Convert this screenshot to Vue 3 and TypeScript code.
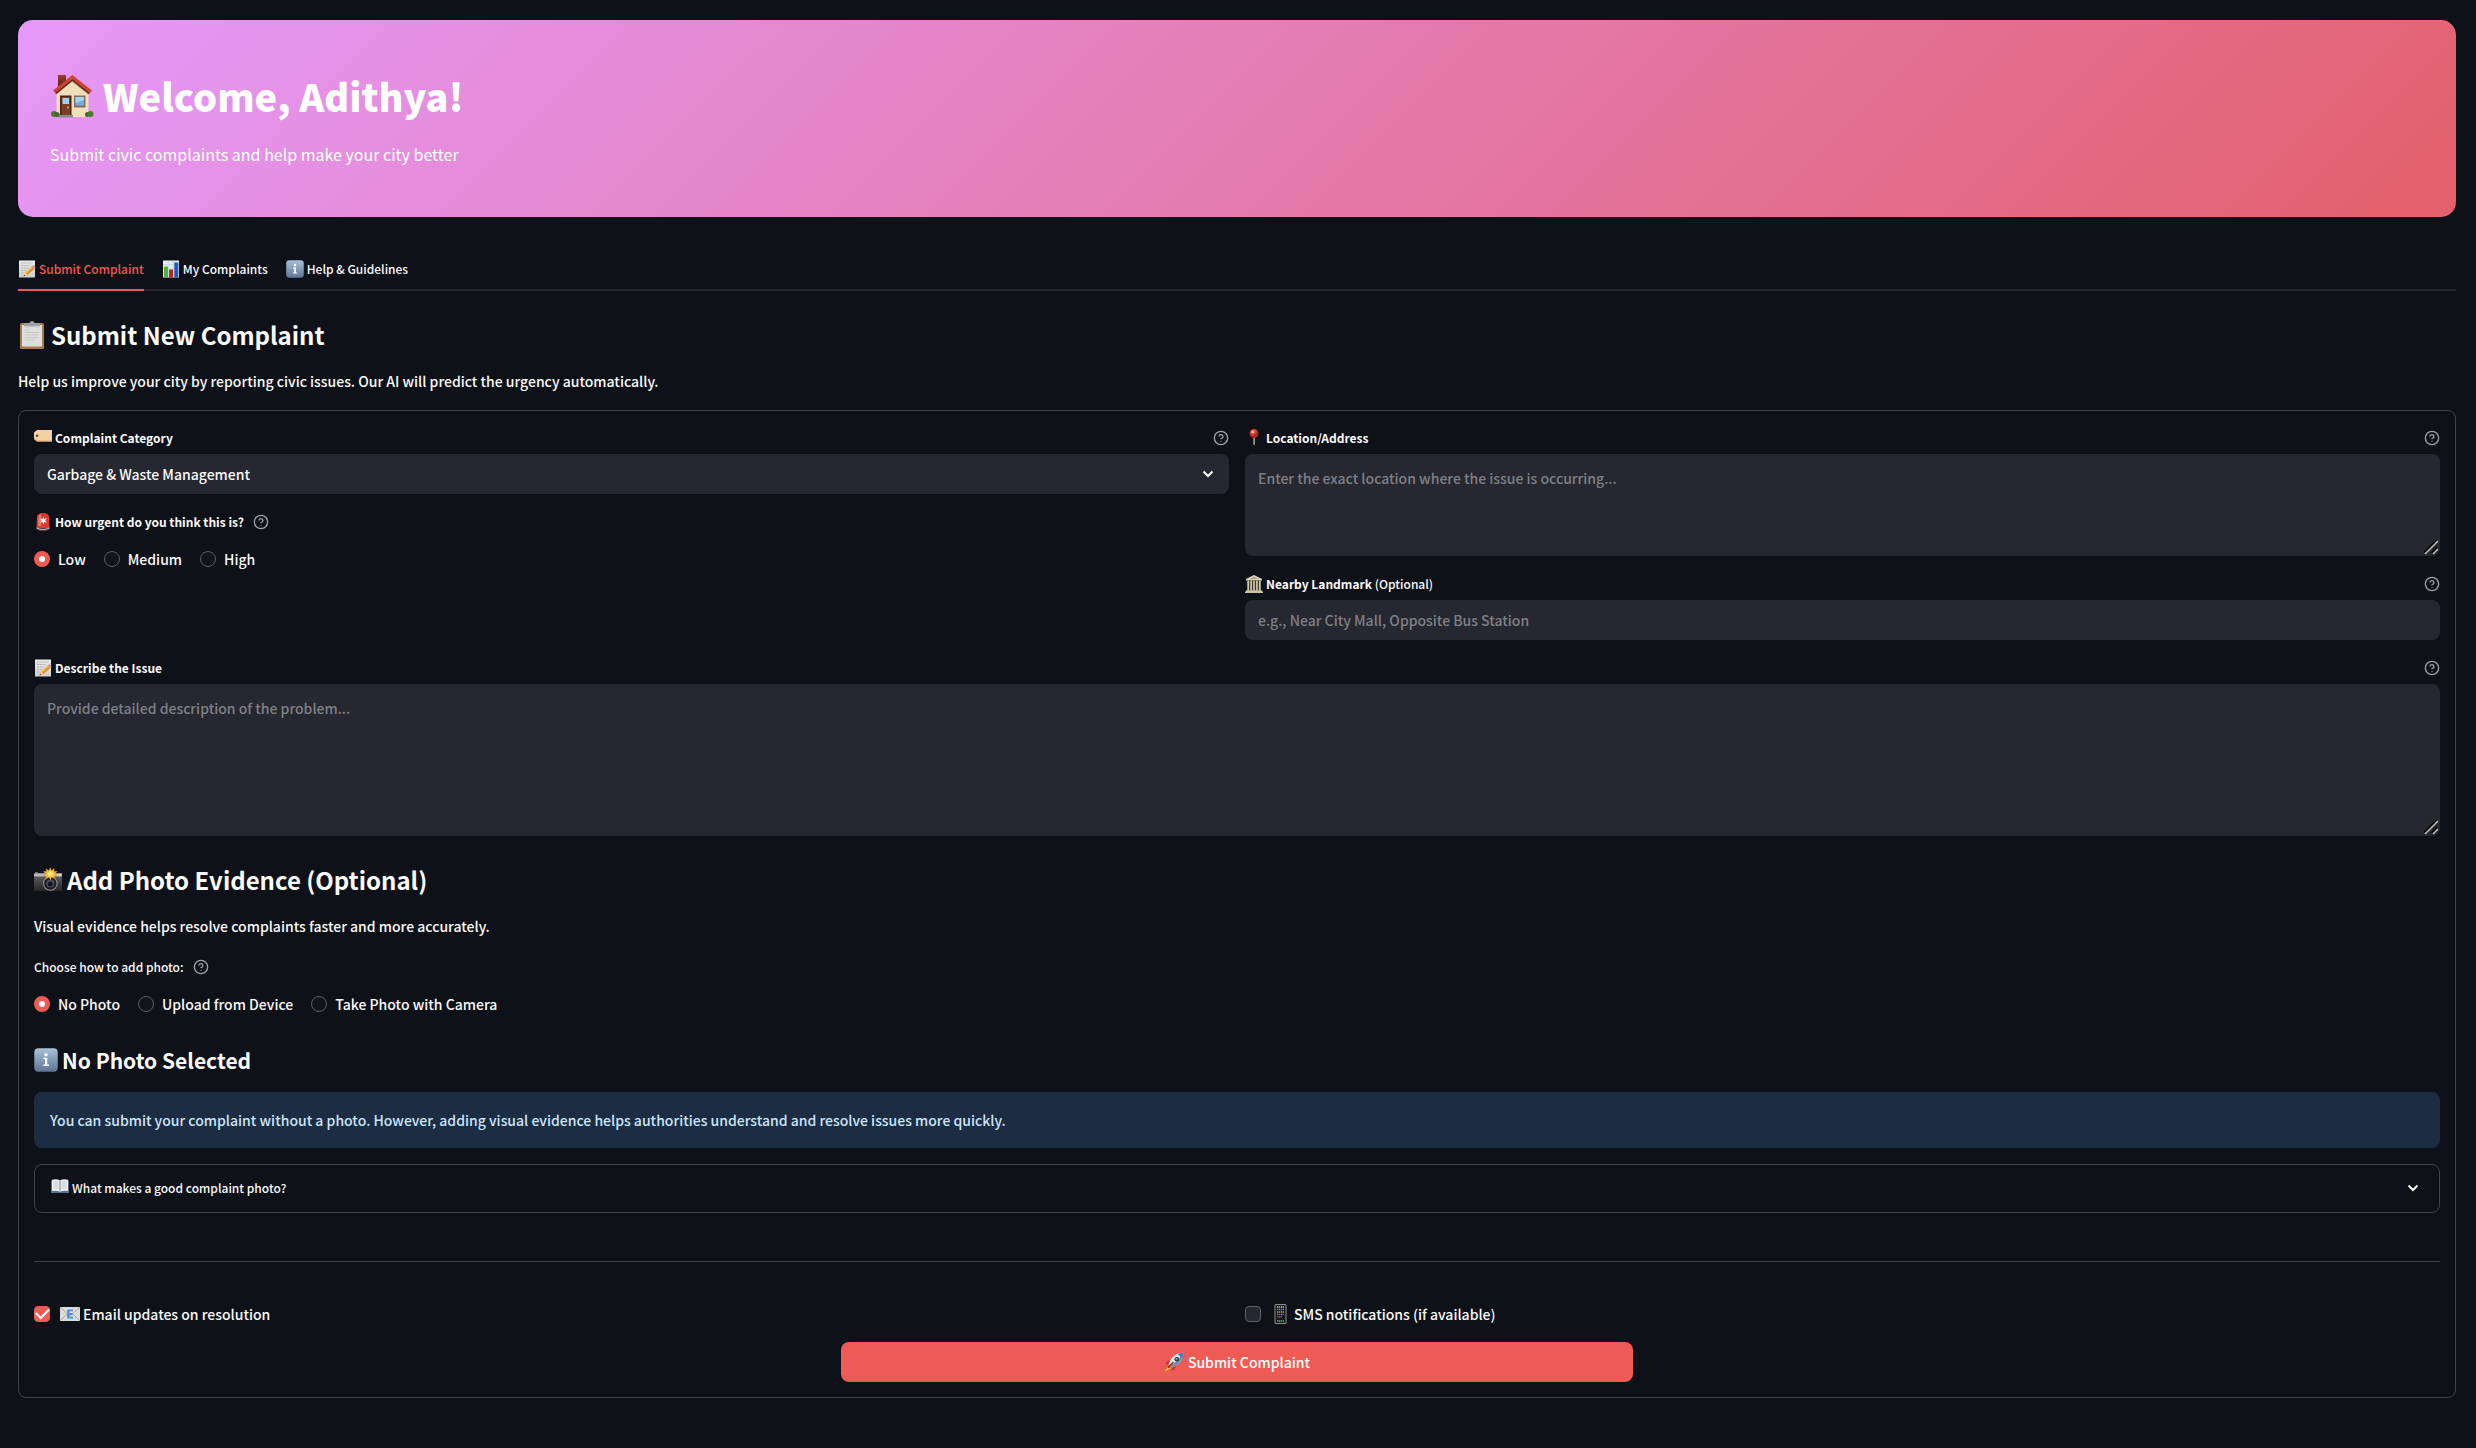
<script setup lang="ts">
import { ref } from 'vue'

interface Tab {
  id: string
  icon: string
  label: string
}

const tabs: Tab[] = [
  { id: 'submit', icon: 'memo', label: 'Submit Complaint' },
  { id: 'mine', icon: 'chart', label: 'My Complaints' },
  { id: 'help', icon: 'info', label: 'Help & Guidelines' },
]
const activeTab = ref('submit')

const category = ref('Garbage & Waste Management')
const urgencyLevels = ['Low', 'Medium', 'High']
const urgency = ref('Low')
const location = ref('')
const landmark = ref('')
const description = ref('')
const photoModes = ['No Photo', 'Upload from Device', 'Take Photo with Camera']
const photoMode = ref('No Photo')
const emailUpdates = ref(true)
const smsUpdates = ref(false)
</script>

<template>
  <svg class="sprite" aria-hidden="true">
    <defs>
      <linearGradient id="g-blue" x1="0" y1="0" x2="0" y2="1">
        <stop offset="0" stop-color="#a9c0d8" />
        <stop offset="1" stop-color="#5d7793" />
      </linearGradient>
      <linearGradient id="g-paper" x1="0" y1="0" x2="0" y2="1">
        <stop offset="0" stop-color="#e9e9e9" />
        <stop offset="1" stop-color="#cfcfcf" />
      </linearGradient>
      <linearGradient id="g-chimney" x1="0" y1="0" x2="0" y2="1">
        <stop offset="0" stop-color="#a03c2c" />
        <stop offset="1" stop-color="#4f1a12" />
      </linearGradient>
      <linearGradient id="g-camera" x1="0" y1="0" x2="0" y2="1">
        <stop offset="0" stop-color="#6e6e6e" />
        <stop offset="1" stop-color="#262626" />
      </linearGradient>
      <radialGradient id="g-flash">
        <stop offset="0" stop-color="#fffbd0" />
        <stop offset="0.45" stop-color="#ffc42e" />
        <stop offset="1" stop-color="#e98a1c" />
      </radialGradient>
      <radialGradient id="g-pin" cx="0.4" cy="0.3">
        <stop offset="0" stop-color="#ff9b90" />
        <stop offset="0.5" stop-color="#dd3f35" />
        <stop offset="1" stop-color="#a62a22" />
      </radialGradient>
    </defs>

    <symbol id="house" viewBox="0 0 44 44">
      <rect x="8" y="1" width="8" height="13" fill="url(#g-chimney)" />
      <path d="M22 4 38.500 17V43H6.500V17Z" fill="#f0dfb8" />
      <path d="M22 4 38.500 17V21L22 8 6.500 20V17Z" fill="#cbb58a" />
      <path d="M22.300 1 42 16.500 40 19 22.300 5 5 19 3 16.500Z" fill="#cd4330" />
      <path d="M22.300 5 40 19 38.500 20 22.300 7 6.500 20 5 19Z" fill="#6d2218" />
      <rect x="10" y="21.500" width="11.500" height="21" fill="#4b2114" />
      <rect x="11.500" y="23" width="8.500" height="19" fill="#7c3d27" />
      <rect x="12.500" y="24" width="6.500" height="6" fill="#9fd0ef" />
      <circle cx="18" cy="33.500" r="1" fill="#e9c24b" />
      <rect x="24" y="21.500" width="11.500" height="12" fill="#7a6f60" />
      <rect x="25.500" y="23" width="8.500" height="8.500" fill="#6faede" />
      <path d="M25.500 23h8.500v3l-8.500 3Z" fill="#a5d2f2" />
      <rect x="8" y="41" width="15" height="2.500" fill="#8d8a84" />
      <circle cx="4" cy="40" r="3" fill="#4d7a2b" />
      <circle cx="7" cy="40.500" r="2.500" fill="#3f6a24" />
      <circle cx="37.500" cy="40.500" r="2.500" fill="#3f6a24" />
      <circle cx="40.500" cy="40" r="3" fill="#4d7a2b" />
    </symbol>

    <symbol id="memo" viewBox="0 0 18 18">
      <rect x="1" y="0.500" width="16" height="17" fill="url(#g-paper)" />
      <path d="M3 3h11M3 5.500h9M3 8h7M3 10.500h5M3 13h3" stroke="#a9acb0" stroke-width="0.800" stroke-dasharray="2 0.700" />
      <path d="M5.500 16.500 7 12.500 13.500 6.500 16 9 9.500 15Z" fill="#f2bf3a" />
      <path d="M8.200 13.800 14.700 7.800 16 9 9.500 15Z" fill="#cf8f1f" />
      <path d="M5.500 16.500 7 12.500 9.500 15Z" fill="#e7cda2" />
      <path d="M5.500 16.500 6.200 14.700 7.200 15.800Z" fill="#333" />
      <path d="M13.500 6.500 15.300 5 17.700 7.500 16 9Z" fill="#e08c90" />
    </symbol>

    <symbol id="chart" viewBox="0 0 18 18">
      <rect x="1" y="0.500" width="16" height="17" fill="#e4ebf1" />
      <path d="M1 4.500h16M1 8.500h16M1 12.500h16M6.300.5v17M11.600.5v17" stroke="#bccad6" stroke-width="0.600" />
      <rect x="2" y="6.500" width="4" height="11" fill="#4fb43c" />
      <rect x="7" y="9.500" width="4" height="8" fill="#b62a25" />
      <rect x="12.300" y="2.500" width="4" height="15" fill="#2558b5" />
    </symbol>

    <symbol id="info" viewBox="0 0 24 24">
      <rect x="0.300" y="0.300" width="23.400" height="23.400" rx="4" fill="url(#g-blue)" />
      <circle cx="12" cy="6.700" r="1.700" fill="#fff" />
      <path d="M9.500 9.800H13.200V16.600H15V18H9.200V16.600H11V11.200H9.500Z" fill="#fff" />
    </symbol>

    <symbol id="clipboard" viewBox="0 0 28 28">
      <rect x="2" y="2" width="24" height="26" rx="1.500" fill="#a67c48" />
      <rect x="4" y="4" width="20" height="21.500" fill="#dedede" />
      <path d="M6.500 9h5M6.500 11.500h14M6.500 14h14M6.500 16.500h14M6.500 19h10" stroke="#c9c9c9" stroke-width="1.200" />
      <path d="M6 6V3.500Q6 2 9 2H11.500Q12 0 14 0T16.500 2H19Q22 2 22 3.500V6Z" fill="#9ba1a9" />
      <path d="M6 5h16v1.500H6Z" fill="#c9cdd2" />
    </symbol>

    <symbol id="tag" viewBox="0 0 18 18">
      <path d="M3 1H18V12.500H3L0 10V3.500Z" fill="#f2d2a2" />
      <path d="M3 12.500 0 10V9l3 2.500H18v1Z" fill="#cfa873" />
      <circle cx="3" cy="6.700" r="1.200" fill="#5c4630" />
    </symbol>

    <symbol id="siren" viewBox="0 0 18 18">
      <path d="M2.500 15 3 3.500Q3.500 0 9 0T15 3.500L15.500 15Z" fill="#dd3a2f" />
      <path d="M4 13 4.500 4Q5 1.500 7 1.200V13Z" fill="#f07a6d" />
      <path d="M2.500 14.500Q9 17 15.500 14.500V16Q9 19.500 2.500 16Z" fill="#b9bdc2" />
      <path d="M2.500 15.500Q9 18.500 15.500 15.500V16.500Q9 19.500 2.500 16.500Z" fill="#6d2a26" />
      <path d="M9.500 3.500 10.300 6 13 5 11.200 7.300 13 9.500 10.300 9 9.500 11.800 8.500 9 5.800 9.800 7.700 7.500 5.800 5.200 8.500 6Z" fill="#fff" />
    </symbol>

    <symbol id="pin" viewBox="0 0 18 18">
      <rect x="8.200" y="8" width="1.800" height="8" rx="0.800" fill="#9b8f8a" />
      <circle cx="9" cy="4.500" r="4.500" fill="url(#g-pin)" />
      <ellipse cx="7.600" cy="2.900" rx="1.500" ry="1" fill="#ffd0ca" />
    </symbol>

    <symbol id="bank" viewBox="0 0 18 18">
      <path d="M9 0 17 4V5.500H1V4Z" fill="#ddd7bb" />
      <path d="M9 1.500 13.500 4H4.500Z" fill="#a79f7f" />
      <rect x="2" y="5.500" width="14" height="10" fill="#3c392e" />
      <path d="M3.200 5.500v10M6.100 5.500v10M9 5.500v10M11.900 5.500v10M14.800 5.500v10" stroke="#d6cfae" stroke-width="1.600" />
      <path d="M1 15.300H17V16.500H18V18H0V16.500H1Z" fill="#cbc4a2" />
    </symbol>

    <symbol id="camera" viewBox="0 0 28 28">
      <path d="M0 8.500 1 7V6H4V7H9L11 5.500H21L22.500 7H28V25H0Z" fill="url(#g-camera)" />
      <path d="M0 7.500H28V10.500H0Z" fill="#b9b9b9" />
      <rect x="22.500" y="8" width="4.500" height="2" fill="#e4d9b0" />
      <circle cx="16.300" cy="17.500" r="7.300" fill="#8f8f8f" />
      <circle cx="16.300" cy="17.500" r="6.200" fill="#1e1e1e" />
      <circle cx="16.300" cy="17.500" r="4" fill="#4d525c" />
      <circle cx="16.300" cy="18" r="2.500" fill="#15171c" />
      <path d="M16.300 1 17.500 4.500 20.500 2 20 5.500 24 5 21 7.500 24 10 20.300 9.700 20.800 13 17.800 10.800 16.500 14.500 15 11 11.500 13.500 12.500 9.800 9 10 11.800 7.500 9 5 12.700 5.500 11.500 2.500 15 4.500Z" fill="url(#g-flash)" />
    </symbol>

    <symbol id="book" viewBox="0 0 18 18">
      <path d="M0 1.500H18V14H0Z" fill="#57728f" />
      <path d="M1 .8Q5-.6 9 1.200 13-.6 17 .8V12Q13 11 9 12.800 5 11 1 12Z" fill="#eceef0" />
      <path d="M9 1.200V12.800" stroke="#7d858e" stroke-width="1" />
      <path d="M2.500 3h5M2.500 5h5M2.500 7h5M2.500 9h5M10.500 3h5M10.500 5h5M10.500 7h5M10.500 9h5" stroke="#b9bec4" stroke-width="0.700" />
    </symbol>

    <symbol id="email" viewBox="0 0 22 22">
      <rect x="2" y="4" width="20" height="14" fill="#dcdcdc" />
      <path d="M2 18 9 11M22 18 15 11M2 4 12 13 22 4" fill="none" stroke="#a3a3a3" stroke-width="0.900" />
      <path d="M9.200 6.500H15V8.300H11.500V10.100H14.600V11.900H11.500V13.700H15V15.500H9.200Z" fill="#4a8fe0" />
    </symbol>

    <symbol id="phone" viewBox="0 0 22 22">
      <rect x="5.500" y="1" width="12" height="20" rx="1.500" fill="#8d8f92" />
      <rect x="6.500" y="2" width="10" height="18" rx="0.800" fill="#14161a" />
      <path d="M8 4h7" stroke="#b6c3a0" stroke-width="1.300" stroke-dasharray="1.300 0.600" />
      <path d="M8 6.500h7" stroke="#4b8fd8" stroke-width="1.300" stroke-dasharray="1.300 0.600" />
      <path d="M8 9h7" stroke="#d89a3c" stroke-width="1.300" stroke-dasharray="1.300 0.600" />
      <path d="M8 11.500h7" stroke="#a55bc0" stroke-width="1.300" stroke-dasharray="1.300 0.600" />
      <path d="M8 14h5" stroke="#c94a41" stroke-width="1.300" stroke-dasharray="1.300 0.600" />
      <path d="M8 18h7" stroke="#4cc27d" stroke-width="1.300" stroke-dasharray="1.300 0.600" />
    </symbol>

    <symbol id="rocket" viewBox="0 0 20 20">
      <path d="M5 13 1 19.500 7 16Z" fill="#ffd93b" />
      <path d="M6.500 8.500Q3 8 1 12.500L5 12ZM11.500 13.500Q12 17.500 7.500 19L8 15Z" fill="#cf2f2a" />
      <path d="M4.500 11.500 3 15.500 8.500 15.500Z" fill="#e2572b" />
      <path d="M19.500.5Q12 .5 7.500 6.500L4.500 12 8 15.500 13.500 12.500Q19.500 8 19.500.5Z" fill="#dfe7ee" />
      <path d="M19.500.5Q19.500 8 13.500 12.500L8 15.500 6.300 13.800Q14 9 19.500.5Z" fill="#6f93b6" />
      <path d="M19.500.5Q16 .5 13.500 2L18 6.500Q19.500 4 19.500.5Z" fill="#4f7fb5" />
      <circle cx="12.800" cy="7.200" r="2.300" fill="#23364d" />
      <circle cx="12.600" cy="7" r="1.200" fill="#5f88b3" />
      <path d="M9 10.500 4.500 15.500" stroke="#b02723" stroke-width="1.500" stroke-linecap="round" />
    </symbol>

    <symbol id="help-circle" viewBox="0 0 24 24">
      <g fill="none" stroke="currentColor" stroke-width="2" stroke-linecap="round" stroke-linejoin="round">
        <circle cx="12" cy="12" r="10" />
        <path d="M9.090 9a3 3 0 0 1 5.830 1c0 2-3 3-3 3M12 17h.01" />
      </g>
    </symbol>

    <symbol id="chevron" viewBox="0 0 12 8">
      <path d="M1.500 1.500 6 6 10.500 1.500" fill="none" stroke="currentColor" stroke-width="2" />
    </symbol>

    <symbol id="grip" viewBox="0 0 16 16">
      <path d="M0 13 13 0M8 13 13 8" stroke="#000" stroke-width="2" />
      <path d="M1 14 14 1M9 14 14 9" stroke="#c4c4c4" stroke-width="1.500" />
    </symbol>
  </svg>

  <main class="page">
    <header class="banner">
      <h1><svg class="emoji-44" aria-hidden="true"><use href="#house" /></svg>Welcome, Adithya!</h1>
      <p>Submit civic complaints and help make your city better</p>
    </header>

    <div class="tabs" role="tablist">
      <button
        v-for="tab in tabs"
        :key="tab.id"
        type="button"
        role="tab"
        class="tab"
        :class="{ active: activeTab === tab.id }"
        :aria-selected="activeTab === tab.id"
        @click="activeTab = tab.id"
      >
        <svg class="emoji-18" aria-hidden="true"><use :href="'#' + tab.icon" /></svg>{{ tab.label }}
      </button>
    </div>

    <h2><svg class="emoji-28" aria-hidden="true"><use href="#clipboard" /></svg>Submit New Complaint</h2>
    <p class="lead">Help us improve your city by reporting civic issues. Our AI will predict the urgency automatically.</p>

    <form class="panel" @submit.prevent>
      <div class="columns">
        <div class="column">
          <div class="field">
            <div class="label-row">
              <label for="category"><svg class="emoji-18" aria-hidden="true"><use href="#tag" /></svg>Complaint Category</label>
              <svg class="help" aria-hidden="true"><use href="#help-circle" /></svg>
            </div>
            <div class="control">
              <select id="category" v-model="category">
                <option>Garbage &amp; Waste Management</option>
              </select>
              <svg class="chevron in-select" aria-hidden="true"><use href="#chevron" /></svg>
            </div>
          </div>

          <fieldset class="field">
            <legend>
              <span class="legend-text"><svg class="emoji-18" aria-hidden="true"><use href="#siren" /></svg>How urgent do you think this is?</span>
              <svg class="help" aria-hidden="true"><use href="#help-circle" /></svg>
            </legend>
            <div class="choices">
              <label v-for="level in urgencyLevels" :key="level" class="choice">
                <input v-model="urgency" type="radio" name="urgency" :value="level" />{{ level }}
              </label>
            </div>
          </fieldset>
        </div>

        <div class="column">
          <div class="field">
            <div class="label-row">
              <label for="location"><svg class="emoji-18" aria-hidden="true"><use href="#pin" /></svg>Location/Address</label>
              <svg class="help" aria-hidden="true"><use href="#help-circle" /></svg>
            </div>
            <div class="control">
              <textarea id="location" v-model="location" class="short" placeholder="Enter the exact location where the issue is occurring..." />
              <svg class="grip" aria-hidden="true"><use href="#grip" /></svg>
            </div>
          </div>

          <div class="field">
            <div class="label-row">
              <label for="landmark"><svg class="emoji-18" aria-hidden="true"><use href="#bank" /></svg><span>Nearby Landmark <span class="plain">(Optional)</span></span></label>
              <svg class="help" aria-hidden="true"><use href="#help-circle" /></svg>
            </div>
            <input id="landmark" v-model="landmark" type="text" class="text-input" placeholder="e.g., Near City Mall, Opposite Bus Station" />
          </div>
        </div>
      </div>

      <div class="field describe">
        <div class="label-row">
          <label for="description"><svg class="emoji-18" aria-hidden="true"><use href="#memo" /></svg>Describe the Issue</label>
          <svg class="help" aria-hidden="true"><use href="#help-circle" /></svg>
        </div>
        <div class="control">
          <textarea id="description" v-model="description" class="tall" placeholder="Provide detailed description of the problem..." />
          <svg class="grip" aria-hidden="true"><use href="#grip" /></svg>
        </div>
      </div>

      <h2><svg class="emoji-28" aria-hidden="true"><use href="#camera" /></svg>Add Photo Evidence (Optional)</h2>
      <p class="lead">Visual evidence helps resolve complaints faster and more accurately.</p>

      <fieldset class="field">
        <legend>
          <span class="legend-text plain">Choose how to add photo:</span>
          <svg class="help" aria-hidden="true"><use href="#help-circle" /></svg>
        </legend>
        <div class="choices">
          <label v-for="mode in photoModes" :key="mode" class="choice">
            <input v-model="photoMode" type="radio" name="photo" :value="mode" />{{ mode }}
          </label>
        </div>
      </fieldset>

      <h3><svg class="emoji-24" aria-hidden="true"><use href="#info" /></svg>No Photo Selected</h3>

      <div class="notice" role="status">
        You can submit your complaint without a photo. However, adding visual evidence helps authorities understand and resolve issues more quickly.
      </div>

      <details class="expander">
        <summary>
          <span class="summary-text"><svg class="emoji-18" aria-hidden="true"><use href="#book" /></svg>What makes a good complaint photo?</span>
          <svg class="chevron" aria-hidden="true"><use href="#chevron" /></svg>
        </summary>
      </details>

      <hr />

      <div class="columns">
        <label class="choice">
          <input v-model="emailUpdates" type="checkbox" />
          <span class="choice-text"><svg class="emoji-22" aria-hidden="true"><use href="#email" /></svg>Email updates on resolution</span>
        </label>
        <label class="choice">
          <input v-model="smsUpdates" type="checkbox" />
          <span class="choice-text"><svg class="emoji-22" aria-hidden="true"><use href="#phone" /></svg>SMS notifications (if available)</span>
        </label>
      </div>

      <div class="actions">
        <button type="submit" class="submit"><svg class="emoji-20" aria-hidden="true"><use href="#rocket" /></svg>Submit Complaint</button>
      </div>
    </form>
  </main>
</template>

<style>
html,
body {
  min-height: 100%;
  background: #0e1117;
}
</style>

<style scoped>
.sprite {
  position: absolute;
  width: 0;
  height: 0;
}

.page {
  padding: 20px 20px 50px 18px;
  color: #fafafa;
  font: 500 14px/24px "Noto Sans CJK SC", "Noto Sans", sans-serif;
}

.page *,
.page {
  box-sizing: border-box;
}

svg {
  flex: none;
}

h1,
h2,
h3,
p {
  margin: 0;
}

h1,
h2,
h3 {
  display: flex;
  align-items: center;
  font-weight: 700;
}

button,
input,
select,
textarea {
  margin: 0;
  font: inherit;
  color: inherit;
}

.emoji-18 { width: 18px; height: 18px; }
.emoji-20 { width: 20px; height: 20px; }
.emoji-22 { width: 22px; height: 22px; }
.emoji-24 { width: 24px; height: 24px; }
.emoji-28 { width: 28px; height: 28px; }
.emoji-44 { width: 44px; height: 44px; }

/* Banner */
.banner {
  padding: 49px 32px;
  border-radius: 15px;
  background: linear-gradient(135deg, #e599fa 0%, #e3606b 100%);
  color: #fff;
}

.banner h1 {
  gap: 9px;
  font-size: 38px;
  font-weight: 900;
  line-height: 54px;
}

.banner p {
  margin-top: 17px;
  font-size: 16px;
  font-weight: 400;
  line-height: 28px;
}

/* Tabs */
.tabs {
  display: flex;
  gap: 18px;
  margin-top: 32px;
  box-shadow: inset 0 -2px #26272b;
}

.tab {
  display: flex;
  align-items: center;
  gap: 3px;
  height: 42px;
  padding: 0;
  border: 0;
  border-bottom: 2px solid transparent;
  background: none;
  font-size: 12px;
  white-space: nowrap;
  cursor: pointer;
}

.tab.active {
  border-color: #ec5a53;
  color: #ec5a53;
}

/* Headings */
h2 {
  gap: 5px;
  margin: 27px 0 17px;
  font-size: 24px;
  line-height: 34px;
}

h3 {
  gap: 4px;
  margin: 21px 0 18px;
  font-size: 21px;
  line-height: 28px;
}

.lead {
  margin-bottom: 17px;
}

/* Form */
.panel {
  padding: 15px;
  border: 1px solid #414246;
  border-radius: 8px;
}

.columns {
  display: grid;
  grid-template-columns: 1fr 1fr;
  gap: 16px;
}

.column {
  display: flex;
  flex-direction: column;
  gap: 16px;
  min-width: 0;
}

.field {
  min-width: 0;
  margin: 0;
  padding: 0;
  border: 0;
}

.describe {
  margin-top: 16px;
}

.label-row,
legend {
  display: flex;
  align-items: center;
  height: 24px;
  margin-bottom: 4px;
  padding: 0;
  font-size: 12px;
  font-weight: 700;
}

.label-row {
  justify-content: space-between;
}

legend {
  gap: 9px;
}

.label-row label,
.legend-text,
.summary-text,
.choice-text {
  display: flex;
  align-items: center;
  gap: 3px;
}

.plain {
  font-weight: 500;
}

.help {
  width: 16px;
  height: 16px;
  color: #a0a1a4;
}

.control {
  position: relative;
  display: flex;
}

select,
textarea,
.text-input {
  display: block;
  width: 100%;
  border: 0;
  border-radius: 8px;
  outline: 0;
  background: #262730;
}

select,
.text-input {
  height: 40px;
  padding: 0 13px;
}

select {
  appearance: none;
}

textarea {
  padding: 12px 13px;
  resize: vertical;
}

textarea::-webkit-resizer {
  background: transparent;
}

textarea::placeholder,
.text-input::placeholder {
  color: #7f8085;
  opacity: 1;
}

.short { height: 102px; }
.tall { height: 152px; }

.chevron {
  width: 12px;
  height: 8px;
}

.in-select {
  position: absolute;
  top: 16px;
  right: 15px;
  pointer-events: none;
}

.grip {
  position: absolute;
  right: 0;
  bottom: 0;
  width: 16px;
  height: 16px;
  pointer-events: none;
}

/* Radios and tick boxes */
.choices {
  display: flex;
  gap: 18px;
  height: 42px;
}

.choice {
  display: flex;
  align-items: center;
  gap: 8px;
}

.choice input {
  flex: none;
  width: 16px;
  height: 16px;
  appearance: none;
  border: 1px solid #5e5f65;
  border-radius: 50%;
  background: #12141b;
}

.choice input[type="radio"]:checked {
  border: 5px solid #ee5a54;
  background: #fff;
}

.choice input[type="checkbox"] {
  display: grid;
  place-items: center;
  border-radius: 4px;
  background: #262730;
}

.choice input[type="checkbox"]:checked {
  border-color: #ee5a54;
  background: #ee5a54;
}

.choice input[type="checkbox"]:checked::after {
  content: "";
  width: 11px;
  height: 6px;
  margin-bottom: 4px;
  border: solid #fff;
  border-width: 0 0 2px 2px;
  transform: rotate(-45deg);
}

.notice {
  padding: 16px;
  border-radius: 8px;
  background: #1c2c42;
  color: #c9e6fb;
}

.expander {
  margin-top: 16px;
  padding-bottom: 1px;
  border: 1px solid #414246;
  border-radius: 8px;
}

.expander summary {
  display: flex;
  align-items: center;
  justify-content: space-between;
  height: 46px;
  padding: 0 20px 0 16px;
  font-size: 12px;
  list-style: none;
  cursor: pointer;
}

hr {
  height: 1px;
  margin: 48px 0 40px;
  border: 0;
  background: #414246;
}

.actions {
  display: grid;
  grid-template-columns: 1fr 1fr 1fr;
  gap: 16px;
  margin-top: 16px;
}

.submit {
  display: flex;
  grid-column: 2;
  align-items: center;
  justify-content: center;
  gap: 4px;
  height: 40px;
  padding: 0 12px;
  border: 0;
  border-radius: 8px;
  background: #ee5b54;
  color: #fff;
  cursor: pointer;
}
</style>
